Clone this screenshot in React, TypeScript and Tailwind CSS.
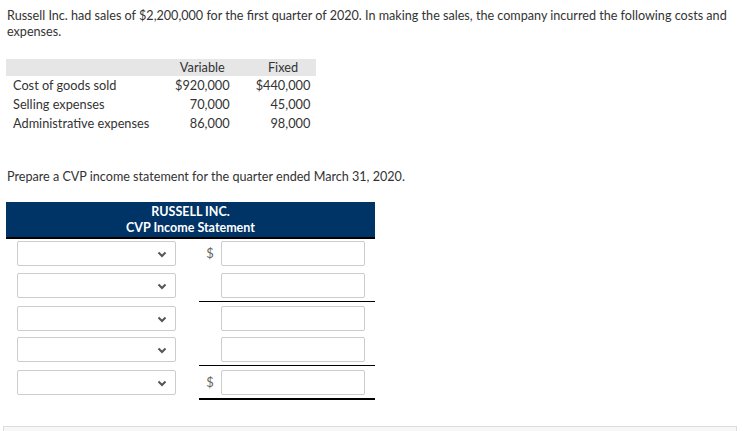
import React from "react";

const costs = [
  { label: "Cost of goods sold", variable: "$920,000", fixed: "$440,000" },
  { label: "Selling expenses", variable: "70,000", fixed: "45,000" },
  { label: "Administrative expenses", variable: "86,000", fixed: "98,000" },
];

type Row = { dollar: boolean; line: "none" | "thin" | "thick"; mt: string };

const rows: Row[] = [
  { dollar: true, line: "none", mt: "mt-[2px]" },
  { dollar: false, line: "thin", mt: "mt-[7px]" },
  { dollar: false, line: "none", mt: "mt-[4px]" },
  { dollar: false, line: "thin", mt: "mt-[6px]" },
  { dollar: true, line: "thick", mt: "mt-[4px]" },
];

function Chevron() {
  return (
    <svg width="10" height="7" viewBox="0 0 10 7" className="absolute right-[8px] top-[9px]">
      <path d="M1.5 1.5 L5 5 L8.5 1.5" fill="none" stroke="#555" strokeWidth="2" />
    </svg>
  );
}

export default function App() {
  return (
    <div className="w-[743px] h-[431px] overflow-hidden bg-white text-[#333] font-['Lato',sans-serif]">
      <p className="pl-[7px] pr-[10px] pt-[8px] text-[12.6px] leading-[16px]">
        Russell Inc. had sales of $2,200,000 for the first quarter of 2020. In making the sales, the company incurred the following costs and expenses.
      </p>

      <table className="ml-[6px] mt-[19px] text-[12.75px] border-collapse">
        <thead>
          <tr className="bg-[#e6e6e6] h-[17px]">
            <th className="w-[163px]"></th>
            <th className="font-normal text-center px-[6px] leading-[17px]">Variable</th>
            <th className="font-normal text-center pl-[20px] pr-[6px] leading-[17px]">Fixed</th>
          </tr>
        </thead>
        <tbody>
          {costs.map((c) => (
            <tr key={c.label} className="h-[19px]">
              <td className="pl-[7px] text-left">{c.label}</td>
              <td className="text-right px-[6px]">{c.variable}</td>
              <td className="text-right pl-[20px] pr-[6px]">{c.fixed}</td>
            </tr>
          ))}
        </tbody>
      </table>

      <p className="pl-[7px] mt-[36px] text-[12.6px] leading-[16px]">
        Prepare a CVP income statement for the quarter ended March 31, 2020.
      </p>

      <div className="ml-[6px] mt-[17px] w-[369px]">
        <div className="bg-[#003366] h-[37px] border-b-2 border-black text-white font-bold text-[12.5px] leading-[16px] text-center pt-[2px]">
          <div>RUSSELL INC.</div>
          <div>CVP Income Statement</div>
        </div>

        {rows.map((r, i) => (
          <div key={i} className={`flex items-start ${r.mt}`}>
            <div className="relative ml-[11px] w-[159px] h-[25px] border border-[#cccccc] rounded-[2px] bg-white">
              <Chevron />
            </div>
            <div
              className={`ml-[23px] w-[176px] flex items-start ${
                r.line === "thin"
                  ? "pb-[3px] border-b border-black"
                  : r.line === "thick"
                  ? "pb-[3px] border-b-2 border-black"
                  : ""
              }`}
            >
              <div className="w-[22px] h-[25px] flex items-center justify-center text-[13px] text-[#666]">
                {r.dollar ? "$" : ""}
              </div>
              <div className="w-[144px] h-[25px] border border-[#cccccc] rounded-[2px] bg-white"></div>
            </div>
          </div>
        ))}
      </div>

      <div className="ml-[3px] mr-[6px] mt-[26px] h-[20px] border border-[#dddddd] bg-[#f7f7f7]"></div>
    </div>
  );
}
